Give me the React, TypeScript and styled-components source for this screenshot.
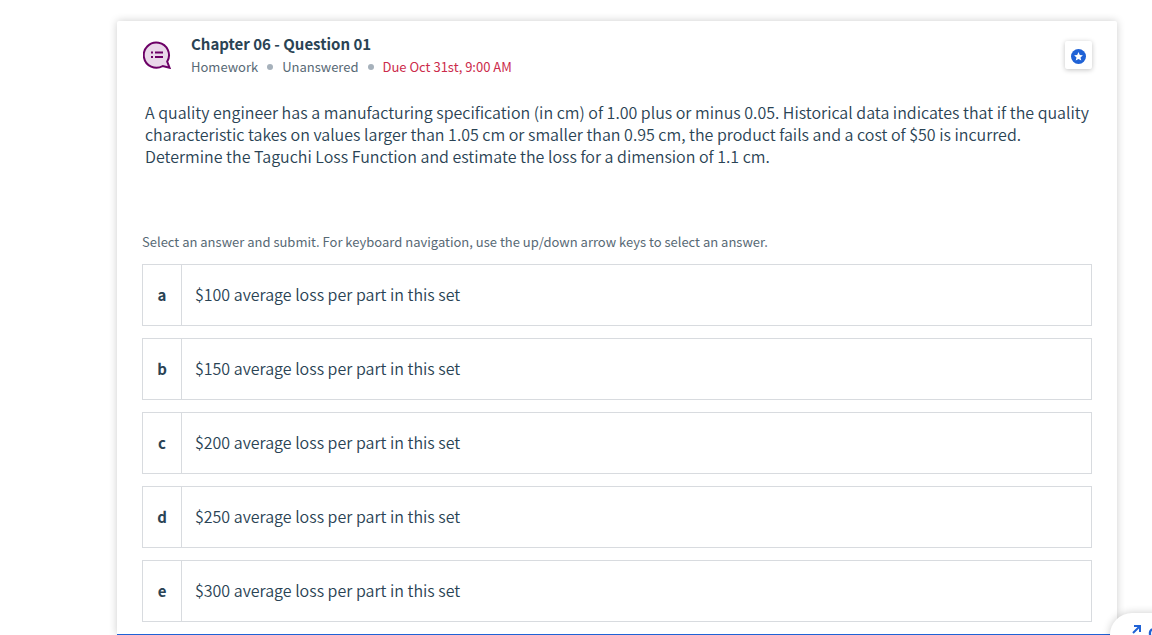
import React, { useState } from "react";
import styled, { createGlobalStyle } from "styled-components";

const GlobalStyle = createGlobalStyle`
  *, *::before, *::after { box-sizing: border-box; }
  html { overflow: hidden auto; scrollbar-width: none; }
  body {
    margin: 0;
    background: #fff;
    color: #2a4354;
    font-family: "Noto Sans CJK SC", "Noto Sans", sans-serif;
    font-size: 16px;
    font-weight: 350;
    line-height: 22px;
  }
`;

const Page = styled.main`
  padding: 21px 35px 0 117px;
`;

const Card = styled.article`
  background: #fff;
  border-bottom: 1px solid #1f62d6;
  border-radius: 2px 2px 0 0;
  box-shadow: 0 0 8px rgba(0, 0, 0, 0.2);
`;

const Header = styled.header`
  display: flex;
  align-items: flex-start;
  padding: 11px 25px 0 26px;
`;

const QuestionIcon = styled.svg`
  flex: none;
  width: 28px;
  height: 28px;
  margin-top: 9px;
`;

const Heading = styled.div`
  flex: 1;
  margin-left: 20px;
`;

const Title = styled.h1`
  margin: 0;
  font-size: 15px;
  font-weight: 600;
  line-height: 23px;
`;

const Meta = styled.p`
  display: flex;
  align-items: center;
  gap: 9px;
  margin: 0;
  color: #576975;
  font-size: 13px;
  font-weight: 400;
  line-height: 23px;
`;

const Dot = styled.span`
  width: 6px;
  height: 6px;
  border-radius: 50%;
  background: #a6b1bb;
`;

const Due = styled.span`
  color: #cc2b4b;
`;

const StarButton = styled.button`
  display: grid;
  place-items: center;
  width: 27px;
  height: 28px;
  margin-top: 9px;
  padding: 2px 0 0;
  border: 0;
  border-radius: 2px;
  background: #fff;
  box-shadow: 0 1px 5px rgba(0, 0, 0, 0.24);
  cursor: pointer;
`;

const Prompt = styled.p`
  margin: 0;
  padding: 23px 25px 0 28px;
`;

const Answers = styled.fieldset`
  display: flex;
  flex-direction: column;
  gap: 12px;
  min-width: 0;
  margin: 0;
  padding: 65px 25px 12px;
  border: 0;
`;

const Hint = styled.legend`
  float: left;
  padding: 0;
  color: #576975;
  font-size: 13px;
  font-weight: 400;
  line-height: 20px;
`;

const Option = styled.label`
  display: grid;
  grid-template-columns: 39px 1fr;
  height: 62px;
  border: 1px solid #d8dbdf;
  cursor: pointer;

  &:focus-within { border-color: #1f62d6; }
`;

const Radio = styled.input`
  position: absolute;
  opacity: 0;
  pointer-events: none;
`;

const Letter = styled.span<{ $selected: boolean }>`
  display: grid;
  place-items: center;
  border-right: 1px solid #d8dbdf;
  background: ${(p) => (p.$selected ? "#e5eefb" : "transparent")};
  font-size: 15px;
  font-weight: 700;
`;

const OptionText = styled.span`
  align-self: center;
  padding: 0 13px 2px;
`;

const OpenTab = styled.button`
  position: fixed;
  right: -58px;
  bottom: -22px;
  display: flex;
  align-items: center;
  gap: 7px;
  width: 100px;
  height: 44px;
  padding: 0 0 4px 22px;
  border: 0;
  border-radius: 22px;
  background: #fff;
  box-shadow: 0 0 8px rgba(0, 0, 0, 0.2);
  color: #1f62d6;
  font: inherit;
  font-size: 15px;
  font-weight: 700;
  cursor: pointer;
`;

const ArrowIcon = styled.svg`
  flex: none;
  align-self: flex-start;
  margin-top: 12px;
`;

const answers = [
  { id: "a", text: "$100 average loss per part in this set" },
  { id: "b", text: "$150 average loss per part in this set" },
  { id: "c", text: "$200 average loss per part in this set" },
  { id: "d", text: "$250 average loss per part in this set" },
  { id: "e", text: "$300 average loss per part in this set" },
];

export default function App() {
  const [selected, setSelected] = useState("");

  return (
    <>
      <GlobalStyle />
      <Page>
        <Card>
          <Header>
            <QuestionIcon viewBox="0 0 28 28" aria-hidden="true">
              <path
                d="M24.2 20.6A12.6 12.6 0 1 0 19.8 25L26.6 26.8Z"
                fill="#ead8ea"
                stroke="#6c0066"
                strokeWidth="2"
                strokeLinejoin="miter"
              />
              <path
                d="M8 11.6h2M12 11.6h8M8 16h2M12 16h8"
                stroke="#6c0066"
                strokeWidth="2"
              />
            </QuestionIcon>
            <Heading>
              <Title>Chapter 06 - Question 01</Title>
              <Meta>
                <span>Homework</span>
                <Dot />
                <span>Unanswered</span>
                <Dot />
                <Due>Due Oct 31st, 9:00 AM</Due>
              </Meta>
            </Heading>
            <StarButton type="button" aria-label="Bookmark question">
              <svg width="15" height="15" viewBox="0 0 15 15" aria-hidden="true">
                <circle cx="7.5" cy="7.5" r="7.5" fill="#1f62d6" />
                <path
                  d="M7.5 3l1.3 3 3.1.3-2.4 2.1.8 3.2-2.8-1.7-2.8 1.7.8-3.2-2.4-2.1 3.1-.3z"
                  fill="#fff"
                />
              </svg>
            </StarButton>
          </Header>
          <Prompt>
            A quality engineer has a manufacturing specification (in cm) of 1.00 plus or
            minus 0.05. Historical data indicates that if the quality characteristic takes
            on values larger than 1.05 cm or smaller than 0.95 cm, the product fails and a
            cost of $50 is incurred. Determine the Taguchi Loss Function and estimate the
            loss for a dimension of 1.1 cm.
          </Prompt>
          <Answers>
            <Hint>
              Select an answer and submit. For keyboard navigation, use the up/down arrow
              keys to select an answer.
            </Hint>
            {answers.map(({ id, text }) => (
              <Option key={id}>
                <Radio
                  type="radio"
                  name="answer"
                  value={id}
                  checked={selected === id}
                  onChange={() => setSelected(id)}
                />
                <Letter $selected={selected === id}>{id}</Letter>
                <OptionText>{text}</OptionText>
              </Option>
            ))}
          </Answers>
        </Card>
      </Page>
      <OpenTab type="button">
        <ArrowIcon width="9" height="9" viewBox="0 0 9 9" aria-hidden="true">
          <path d="M2 1h6v6M8 1L1 8" fill="none" stroke="#1f62d6" strokeWidth="2" />
        </ArrowIcon>
        <span>Open</span>
      </OpenTab>
    </>
  );
}
